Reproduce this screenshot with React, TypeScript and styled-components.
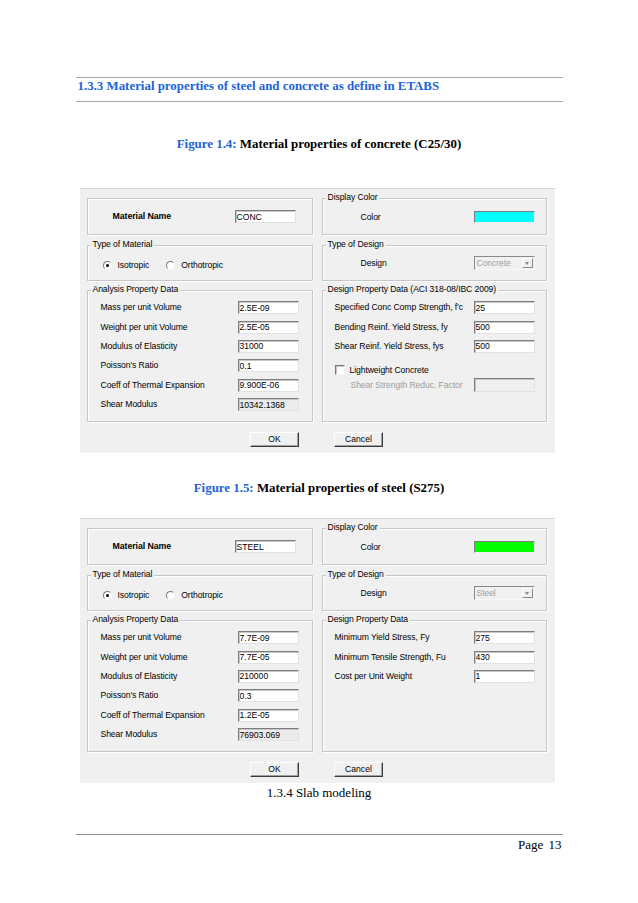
import styled, { createGlobalStyle } from 'styled-components';

const GlobalStyle = createGlobalStyle`
  html, body {
    margin: 0;
    padding: 0;
    background: #ffffff;
  }
`;

const BLUE = '#2163d9';

const Page = styled.div`
  width: 487px;
  margin: 0 auto;
  padding: 77px 0 40px;
  font-family: 'Liberation Serif', 'Times New Roman', serif;
  color: #000;
`;

const SectionHeading = styled.h3`
  box-sizing: border-box;
  height: 25px;
  margin: 0;
  padding: 0 0 0 2px;
  border-top: 1px solid #a8a8a8;
  border-bottom: 1px solid #a8a8a8;
  font-size: 12.9px;
  line-height: 16px;
  font-weight: bold;
  color: ${BLUE};
`;

const Caption = styled.p<{ $top: number }>`
  margin: ${({ $top }) => $top}px 0 0;
  text-align: center;
  font-size: 12.9px;
  line-height: 16px;
  font-weight: bold;

  span {
    color: ${BLUE};
  }
`;

const SubHeading = styled.p`
  margin: 2px 0 0;
  text-align: center;
  font-size: 13px;
  line-height: 16px;
`;

const Footer = styled.div`
  margin-top: 33px;
  padding: 2px 1px 0 0;
  border-top: 1px solid #8c8c8c;
  text-align: right;
  font-size: 13px;
  line-height: 16px;
  word-spacing: 2px;
`;

/* ---- dialog ---- */

const Dialog = styled.div<{ $top: number }>`
  box-sizing: border-box;
  width: 475px;
  height: 265px;
  margin: ${({ $top }) => $top}px 0 0 4px;
  padding: 9px 8px 0 7px;
  background: #f0f0f0;
  border-top: 1px solid #d6d6d6;
  font-family: 'Liberation Sans', Arial, sans-serif;
  font-size: 8.6px;
  letter-spacing: -0.08px;
  line-height: 11px;
  color: #000;
`;

const DialogGrid = styled.div`
  display: grid;
  grid-template-columns: 226px 225px;
  grid-template-rows: 37px 36px 132px;
  column-gap: 9px;
  row-gap: 9.5px;
`;

const Group = styled.div`
  position: relative;
  box-sizing: border-box;
  border: 1px solid #c6c6c6;
  box-shadow: 1px 1px 0 #ffffff, inset 1px 1px 0 #ffffff;
`;

const Legend = styled.span`
  position: absolute;
  top: -7px;
  left: 3px;
  padding: 0 2px;
  background: #f0f0f0;
  white-space: nowrap;
`;

const NameBox = styled(Group)`
  display: flex;
  align-items: center;
  justify-content: space-between;
  padding: 0 16px 0 25px;
`;

const NameLabel = styled.span`
  font-weight: bold;
  font-size: 8.8px;
`;

const SettingBox = styled(Group)`
  display: flex;
  align-items: center;
  justify-content: space-between;
  padding: 1px 11px 0 38px;
`;

const ChoiceBox = styled(Group)`
  display: flex;
  align-items: center;
  gap: 17px;
  padding: 5px 0 0 15px;
`;

const RadioOption = styled.label`
  display: inline-flex;
  align-items: center;
  gap: 6px;
`;

const Radio = styled.span<{ $checked?: boolean }>`
  position: relative;
  box-sizing: border-box;
  width: 9px;
  height: 9px;
  border-radius: 50%;
  border: 1px solid;
  border-color: #7a7a7a #f4f4f4 #f4f4f4 #7a7a7a;
  background: #ffffff;

  &::after {
    content: '';
    display: ${({ $checked }) => ($checked ? 'block' : 'none')};
    position: absolute;
    left: 2px;
    top: 2px;
    width: 3px;
    height: 3px;
    border-radius: 50%;
    background: #000;
  }
`;

const DataBox = styled(Group)<{ $side: 'left' | 'right' }>`
  display: flex;
  flex-direction: column;
  padding: ${({ $side }) => ($side === 'left' ? '7px 13px 0 13px' : '7px 11px 0 12px')};
`;

const FieldRow = styled.div`
  display: grid;
  grid-template-columns: 1fr 61px;
  align-items: center;
  height: 19.4px;
  white-space: nowrap;
`;

const FieldInput = styled.input<{ $muted?: boolean }>`
  box-sizing: border-box;
  width: 61px;
  height: 13px;
  margin: 0;
  padding: 0 1px;
  font: inherit;
  color: #000;
  background: ${({ $muted }) => ($muted ? '#ebebeb' : '#ffffff')};
  border: 1px solid;
  border-color: #7d7d7d #e2e2e2 #e2e2e2 #7d7d7d;
  box-shadow: inset 1px 1px 0 #c8c8c8;
  outline: none;
`;

const CheckRow = styled.label`
  display: flex;
  align-items: center;
  gap: 5px;
  height: 14px;
  margin-top: 7px;
`;

const CheckBox = styled.span`
  box-sizing: border-box;
  width: 10px;
  height: 10px;
  background: #ffffff;
  border: 1px solid;
  border-color: #7a7a7a #f4f4f4 #f4f4f4 #7a7a7a;
  box-shadow: inset 1px 1px 0 #c4c4c4;
`;

const DisabledRow = styled(FieldRow)`
  height: 14px;
  margin-top: 1px;
  padding-left: 16px;
  color: #9c9c9c;
`;

const DisabledInput = styled(FieldInput)`
  height: 14px;
  background: #f0f0f0;
`;

const Swatch = styled.span<{ $color: string }>`
  box-sizing: border-box;
  width: 61px;
  height: 12px;
  background: ${({ $color }) => $color};
  border: 1px solid;
  border-color: #7d7d7d #f0f0f0 #f0f0f0 #7d7d7d;
`;

const Select = styled.span`
  box-sizing: border-box;
  display: flex;
  width: 61px;
  height: 14px;
  background: #f0f0f0;
  color: #a2a2a2;
  border: 1px solid;
  border-color: #8a8a8a #f8f8f8 #f8f8f8 #8a8a8a;
`;

const SelectValue = styled.span`
  flex: 1;
  padding-left: 2px;
  line-height: 12px;
`;

const SelectArrow = styled.span`
  box-sizing: border-box;
  display: flex;
  align-items: center;
  justify-content: center;
  width: 11px;
  margin: 1px 1px 1px 0;
  border: 1px solid;
  border-color: #ffffff #8a8a8a #8a8a8a #ffffff;

  &::after {
    content: '';
    border-left: 2.5px solid transparent;
    border-right: 2.5px solid transparent;
    border-top: 3px solid #8a8a8a;
  }
`;

const ButtonRow = styled.div`
  display: flex;
  justify-content: center;
  gap: 35px;
  margin-top: 10px;
`;

const PushButton = styled.button`
  box-sizing: border-box;
  width: 49px;
  height: 15px;
  padding: 0;
  font: inherit;
  color: #000;
  background: #f0f0f0;
  border: 1px solid;
  border-color: #ffffff #3c3c3c #3c3c3c #ffffff;
  box-shadow: inset -1px -1px 0 #a0a0a0;
`;

type Field = [string, string];

type Material = {
  name: string;
  color: string;
  design: string;
  analysis: Field[];
  designTitle: string;
  designFields: Field[];
  lightweight?: boolean;
};

const analysisLabels = [
  'Mass per unit Volume',
  'Weight per unit Volume',
  'Modulus of Elasticity',
  "Poisson's Ratio",
  'Coeff of Thermal Expansion',
  'Shear Modulus',
];

const concrete: Material = {
  name: 'CONC',
  color: '#00ffff',
  design: 'Concrete',
  analysis: analysisLabels.map((l, i): Field => [
    l,
    ['2.5E-09', '2.5E-05', '31000', '0.1', '9.900E-06', '10342.1368'][i],
  ]),
  designTitle: 'Design Property Data (ACI 318-08/IBC 2009)',
  designFields: [
    ["Specified Conc Comp Strength, f'c", '25'],
    ['Bending Reinf. Yield Stress, fy', '500'],
    ['Shear Reinf. Yield Stress, fys', '500'],
  ],
  lightweight: true,
};

const steel: Material = {
  name: 'STEEL',
  color: '#00ff00',
  design: 'Steel',
  analysis: analysisLabels.map((l, i): Field => [
    l,
    ['7.7E-09', '7.7E-05', '210000', '0.3', '1.2E-05', '76903.069'][i],
  ]),
  designTitle: 'Design Property Data',
  designFields: [
    ['Minimum Yield Stress, Fy', '275'],
    ['Minimum Tensile Strength, Fu', '430'],
    ['Cost per Unit Weight', '1'],
  ],
};

const MaterialDialog = ({ material, top }: { material: Material; top: number }) => (
  <Dialog $top={top}>
    <DialogGrid>
      <NameBox>
        <NameLabel>Material Name</NameLabel>
        <FieldInput readOnly value={material.name} />
      </NameBox>
      <SettingBox>
        <Legend>Display Color</Legend>
        <span>Color</span>
        <Swatch $color={material.color} />
      </SettingBox>

      <ChoiceBox>
        <Legend>Type of Material</Legend>
        <RadioOption>
          <Radio $checked />
          Isotropic
        </RadioOption>
        <RadioOption>
          <Radio />
          Orthotropic
        </RadioOption>
      </ChoiceBox>
      <SettingBox>
        <Legend>Type of Design</Legend>
        <span>Design</span>
        <Select>
          <SelectValue>{material.design}</SelectValue>
          <SelectArrow />
        </Select>
      </SettingBox>

      <DataBox $side="left">
        <Legend>Analysis Property Data</Legend>
        {material.analysis.map(([label, value], i) => (
          <FieldRow key={label}>
            <span>{label}</span>
            <FieldInput readOnly value={value} $muted={i === material.analysis.length - 1} />
          </FieldRow>
        ))}
      </DataBox>
      <DataBox $side="right">
        <Legend>{material.designTitle}</Legend>
        {material.designFields.map(([label, value]) => (
          <FieldRow key={label}>
            <span>{label}</span>
            <FieldInput readOnly value={value} />
          </FieldRow>
        ))}
        {material.lightweight && (
          <>
            <CheckRow>
              <CheckBox />
              Lightweight Concrete
            </CheckRow>
            <DisabledRow>
              <span>Shear Strength Reduc. Factor</span>
              <DisabledInput readOnly value="" />
            </DisabledRow>
          </>
        )}
      </DataBox>
    </DialogGrid>
    <ButtonRow>
      <PushButton>OK</PushButton>
      <PushButton>Cancel</PushButton>
    </ButtonRow>
  </Dialog>
);

export default function App() {
  return (
    <>
      <GlobalStyle />
      <Page>
        <SectionHeading>1.3.3 Material properties of steel and concrete as define in ETABS</SectionHeading>

        <Caption $top={34}>
          <span>Figure 1.4:</span> Material properties of concrete (C25/30)
        </Caption>
        <MaterialDialog material={concrete} top={36} />

        <Caption $top={27}>
          <span>Figure 1.5:</span> Material properties of steel (S275)
        </Caption>
        <MaterialDialog material={steel} top={22} />

        <SubHeading>1.3.4 Slab modeling</SubHeading>
        <Footer>Page 13</Footer>
      </Page>
    </>
  );
}
